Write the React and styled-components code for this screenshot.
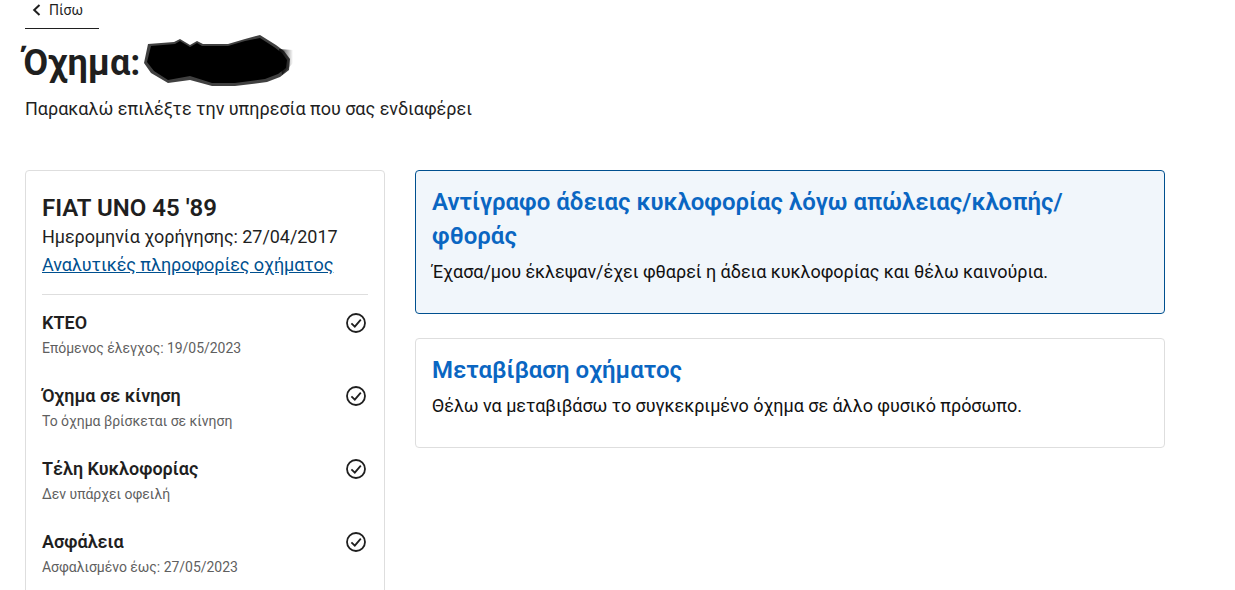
import styled, { createGlobalStyle } from "styled-components";

const statusItems = [
  { title: "ΚΤΕΟ", note: "Επόμενος έλεγχος: 19/05/2023" },
  { title: "Όχημα σε κίνηση", note: "Το όχημα βρίσκεται σε κίνηση" },
  { title: "Τέλη Κυκλοφορίας", note: "Δεν υπάρχει οφειλή" },
  { title: "Ασφάλεια", note: "Ασφαλισμένο έως: 27/05/2023" },
];

const services = [
  {
    title: "Αντίγραφο άδειας κυκλοφορίας λόγω απώλειας/κλοπής/ φθοράς",
    text: "Έχασα/μου έκλεψαν/έχει φθαρεί η άδεια κυκλοφορίας και θέλω καινούρια.",
    active: true,
  },
  {
    title: "Μεταβίβαση οχήματος",
    text: "Θέλω να μεταβιβάσω το συγκεκριμένο όχημα σε άλλο φυσικό πρόσωπο.",
  },
];

function CheckIcon() {
  return (
    <CheckSvg viewBox="0 0 20 20" fill="none" stroke="#1f1f1f" strokeWidth="1.8">
      <circle cx="10" cy="10" r="9" />
      <path d="M5.4 10.4 L8.8 13.6 L14.8 6.6" />
    </CheckSvg>
  );
}

// the plate number is blacked out in the screenshot
function Scribble() {
  return (
    <svg width="150" height="56" viewBox="0 0 150 56">
      <defs>
        <linearGradient id="scribbleFade" x1="0" x2="1" y1="0" y2="0">
          <stop offset="0" stopColor="#000" stopOpacity="0.8" />
          <stop offset="1" stopColor="#000" stopOpacity="0" />
        </linearGradient>
      </defs>
      <path fill="url(#scribbleFade)" d="M136 14 L150 15 L150 28 L139 40 Z" />
      <path
        fill="#000"
        opacity="0.75"
        d="M5 9 L31 7 L37 4 L47 10 L54 6 L60 9 L85 9 L102 4 L117 0 L133 10 L141 16 L147 24 L146 35 L137 42 L124 47 L92 51 L69 51 L47 45 L25 48 L8 38 L1 28 Z"
      />
      <path
        fill="#000"
        d="M8 11 L32 9 L37 6 L47 12 L54 8 L59 11 L85 11 L102 6 L117 3 L131 12 L139 18 L144 25 L143 33 L135 39 L122 44 L92 48 L69 48 L47 41 L25 45 L11 36 L4 27 Z"
      />
    </svg>
  );
}

export default function App() {
  return (
    <>
      <GlobalStyle />
      <Page>
        <BackBar>
          <BackLink href="#">
            <svg width="10" height="12" viewBox="0 0 10 12" fill="none" stroke="#1f1f1f" strokeWidth="2">
              <path d="M8.5 1 L3.2 6 L8.5 11" />
            </svg>
            Πίσω
          </BackLink>
        </BackBar>
        <Heading>
          Όχημα:
          <Scribble />
        </Heading>
        <Intro>Παρακαλώ επιλέξτε την υπηρεσία που σας ενδιαφέρει</Intro>
        <Columns>
          <VehicleCard>
            <VehicleName>FIAT UNO 45 '89</VehicleName>
            <IssueDate>Ημερομηνία χορήγησης: 27/04/2017</IssueDate>
            <DetailsLink href="#">Αναλυτικές πληροφορίες οχήματος</DetailsLink>
            <Divider />
            <StatusList>
              {statusItems.map((item) => (
                <StatusRow key={item.title}>
                  <div>
                    <StatusTitle>{item.title}</StatusTitle>
                    <StatusNote>{item.note}</StatusNote>
                  </div>
                  <CheckIcon />
                </StatusRow>
              ))}
            </StatusList>
          </VehicleCard>
          <ServiceList>
            {services.map((service) => (
              <ServiceCard key={service.title} $active={service.active}>
                <ServiceTitle>{service.title}</ServiceTitle>
                <ServiceText>{service.text}</ServiceText>
              </ServiceCard>
            ))}
          </ServiceList>
        </Columns>
      </Page>
    </>
  );
}

const GlobalStyle = createGlobalStyle`
  html, body {
    margin: 0;
    height: 100%;
    overflow: hidden;
    background: #fff;
  }

  body {
    font-family: Roboto, "Noto Sans", sans-serif;
    color: #1f1f1f;
  }
`;

const Page = styled.div`
  height: 590px;
  overflow: hidden;
  padding: 0 70px 0 25px;
`;

const BackBar = styled.nav`
  width: 74px;
  height: 29px;
  box-sizing: border-box;
  border-bottom: 1px solid #1f1f1f;
`;

const BackLink = styled.a`
  display: flex;
  align-items: center;
  gap: 8px;
  padding-left: 6px;
  height: 20px;
  color: #1f1f1f;
  font-size: 14px;
  text-decoration: none;
`;

const Heading = styled.h1`
  display: flex;
  align-items: center;
  gap: 3px;
  height: 62px;
  margin: 3px 0 0 -2px;
  font-size: 36px;
  font-weight: 700;
  line-height: 62px;
`;

const Intro = styled.p`
  margin: 3px 0 0;
  font-size: 18px;
  line-height: 24px;
  letter-spacing: -0.02px;
`;

const Columns = styled.div`
  display: grid;
  grid-template-columns: 360px 750px;
  gap: 30px;
  margin-top: 49px;
  align-items: start;
`;

const VehicleCard = styled.section`
  box-sizing: border-box;
  height: 500px;
  padding: 23px 16px 0;
  border: 1px solid #dedede;
  border-radius: 4px;
`;

const VehicleName = styled.h2`
  margin: 0;
  font-size: 24px;
  font-weight: 600;
  line-height: 28px;
`;

const IssueDate = styled.p`
  margin: 3px 0 0;
  font-size: 18px;
  line-height: 24px;
  letter-spacing: -0.06px;
`;

const DetailsLink = styled.a`
  display: block;
  margin-top: 4px;
  color: #00508f;
  font-size: 18px;
  line-height: 24px;
  letter-spacing: -0.06px;
  text-decoration: underline;
`;

const Divider = styled.hr`
  margin: 17px 0 16px;
  border: 0;
  border-top: 1px solid #dedede;
`;

const StatusList = styled.div`
  display: flex;
  flex-direction: column;
  gap: 23px;
`;

const StatusRow = styled.div`
  display: flex;
  justify-content: space-between;
  align-items: flex-start;
  padding-right: 2px;
  height: 50px;
`;

const CheckSvg = styled.svg`
  flex: none;
  width: 20px;
  height: 20px;
  margin-top: 2px;
`;

const StatusTitle = styled.div`
  font-size: 18px;
  font-weight: 600;
  line-height: 24px;
`;

const StatusNote = styled.div`
  margin-top: 4px;
  color: #5f5f5f;
  font-size: 14px;
  line-height: 18px;
  letter-spacing: -0.03px;
`;

const ServiceList = styled.div`
  display: flex;
  flex-direction: column;
  gap: 24px;
`;

const ServiceCard = styled.article`
  padding: 14px 16px 29px;
  border: 1px solid ${(p) => (p.$active ? "#00508f" : "#dedede")};
  border-radius: 4px;
  background: ${(p) => (p.$active ? "#f1f6fb" : "#fff")};
`;

const ServiceTitle = styled.h3`
  margin: 0;
  color: #0a66c2;
  font-size: 24px;
  font-weight: 600;
  line-height: 34px;
`;

const ServiceText = styled.p`
  margin: 7px 0 0;
  color: #111;
  font-size: 18px;
  line-height: 24px;
  letter-spacing: -0.04px;
`;
